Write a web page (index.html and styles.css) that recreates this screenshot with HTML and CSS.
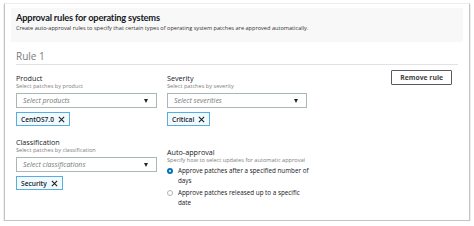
FILE: index.html
```html
<!DOCTYPE html>
<html lang="en">
  <head>
    <meta charset="UTF-8" />
    <title>Approval rules</title>
    <link rel="stylesheet" href="styles.css">
  </head>
  <body>
    <div class="card">
      <div class="card-header">
        <h2 class="card-title">Approval rules for operating systems</h2>
        <div class="card-desc">Create auto-approval rules to specify that certain types of operating system patches are approved automatically.</div>
      </div>

      <div class="rule">
        <div class="rule-title">Rule 1</div>
        <div class="rule-grid">
          <div class="field">
            <div class="field-label">Product</div>
            <div class="field-desc">Select patches by product</div>
            <div class="select"><span>Select products</span><span class="caret"></span></div>
            <div class="tag">CentOS7.0 <svg class="tag-x" viewBox="0 0 8 8"><path d="M1 1L7 7M7 1L1 7" /></svg></div>
          </div>
          <div class="field">
            <div class="field-label">Severity</div>
            <div class="field-desc">Select patches by severity</div>
            <div class="select"><span>Select severities</span><span class="caret"></span></div>
            <div class="tag">Critical <svg class="tag-x" viewBox="0 0 8 8"><path d="M1 1L7 7M7 1L1 7" /></svg></div>
          </div>
          <div class="actions">
            <button class="button">Remove rule</button>
          </div>

          <div class="field field-low">
            <div class="field-label">Classification</div>
            <div class="field-desc">Select patches by classification</div>
            <div class="select"><span>Select classifications</span><span class="caret"></span></div>
            <div class="tag">Security <svg class="tag-x" viewBox="0 0 8 8"><path d="M1 1L7 7M7 1L1 7" /></svg></div>
          </div>
          <div class="field field-auto">
            <div class="field-label">Auto-approval</div>
            <div class="field-desc">Specify how to select updates for automatic approval</div>
            <label class="radio"><span class="radio-dot checked"></span><span>Approve patches after a specified number of days</span></label>
            <label class="radio"><span class="radio-dot"></span><span>Approve patches released up to a specific date</span></label>
          </div>
        </div>
      </div>
    </div>
  </body>
</html>
```

FILE: styles.css
```css
body {
  margin: 0;
  background: #fff;
  font-family: 'Open Sans', sans-serif;
  color: #16191f;
}

.card {
  margin: 3px 4px 0 4px;
  height: 218px;
  box-sizing: border-box;
  border: 1px solid #c4c4c4;
  border-top-color: #eee;
  box-shadow: 0 2px 1px #9a9a9a;
  padding: 4px 6px 0 6px;
}

.card-header {
  background: #f8f8f8;
  height: 34px;
  box-sizing: border-box;
  padding: 4px 5px 0 5px;
}

.card-title {
  margin: 0;
  font-family: 'Lato', sans-serif;
  font-size: 9.3px;
  font-weight: bold;
  letter-spacing: -0.2px;
  line-height: 12px;
}

.card-desc {
  font-size: 5.6px;
  line-height: 9px;
  color: #333;
}

.rule {
  padding: 0 5px;
}

.rule-title {
  font-size: 10px;
  color: #7a7a7a;
  line-height: 13px;
  padding-top: 8px;
  padding-bottom: 1px;
  border-bottom: 1px solid #e2e2e2;
}

.rule-grid {
  display: grid;
  grid-template-columns: 141px 140px 1fr;
  column-gap: 10px;
  padding-top: 9px;
}

.field-label {
  font-size: 7.2px;
  line-height: 9px;
}

.field-desc {
  font-size: 5.6px;
  line-height: 7px;
  color: #7d7d7d;
}

.select {
  display: flex;
  justify-content: space-between;
  align-items: center;
  margin-top: 3px;
  height: 13px;
  border: 1px solid #aab7b8;
  padding: 0 8px 0 6px;
  font-size: 7px;
  font-style: italic;
  color: #777;
}

.caret {
  width: 0;
  height: 0;
  border-left: 2.5px solid transparent;
  border-right: 2.5px solid transparent;
  border-top: 4px solid #222;
}

.tag {
  display: flex;
  align-items: center;
  gap: 4px;
  width: fit-content;
  margin-top: 4px;
  height: 12px;
  padding: 0 4px;
  border: 1px solid #5aaedd;
  background: #f1faff;
  font-size: 6.6px;
  font-weight: 600;
}

.tag-x {
  width: 7px;
  height: 7px;
  stroke: #222;
  stroke-width: 1.3;
}

.actions {
  display: flex;
  justify-content: flex-end;
  align-items: flex-start;
  margin-top: -4px;
  padding-right: 6px;
}

.button {
  height: 15px;
  padding: 0 8px;
  border: 1px solid #545b64;
  border-radius: 1px;
  background: #fff;
  font-family: inherit;
  font-size: 6.8px;
  font-weight: bold;
  color: #444;
  cursor: pointer;
}

.field-low {
  margin-top: 12px;
}

.field-auto {
  margin-top: 22px;
}

.radio {
  display: flex;
  align-items: flex-start;
  gap: 5px;
  margin-top: 2px;
  width: 144px;
  font-size: 6.3px;
  line-height: 10px;
}

.radio-dot {
  flex: none;
  box-sizing: border-box;
  width: 6px;
  height: 6px;
  margin-top: 2px;
  border: 1px solid #aab7b8;
  border-radius: 50%;
}

.radio-dot.checked {
  border: 2px solid #0073bb;
}
```
